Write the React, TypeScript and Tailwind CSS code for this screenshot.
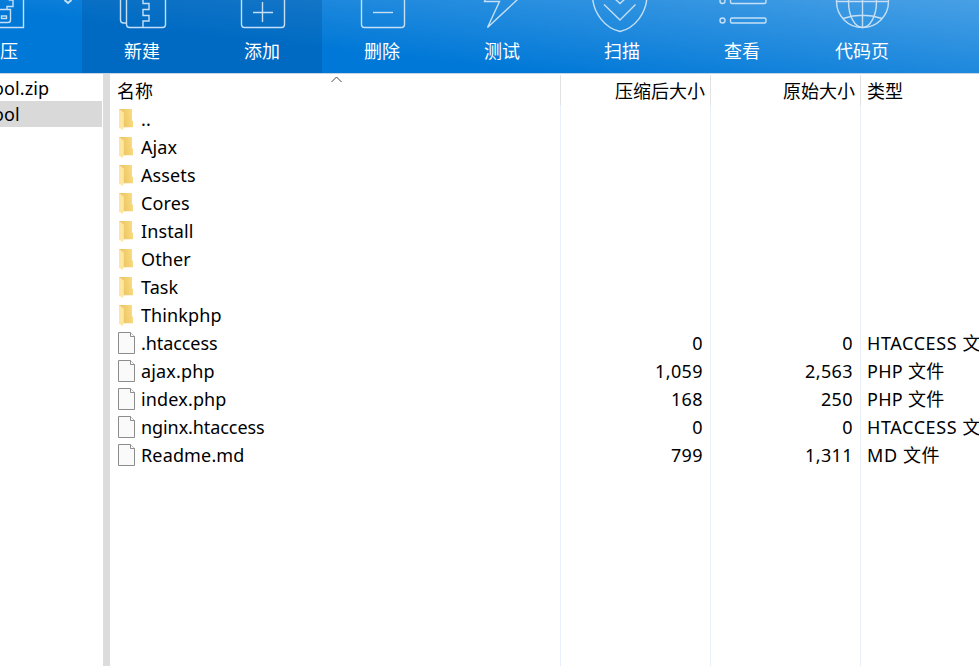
import { type JSX, type ReactNode } from "react";

type Tool = { label: string; icon: ReactNode; active?: boolean };

const tools: Tool[] = [
  {
    label: "新建",
    active: true,
    icon: (
      <>
        <path d="M38.5 -4V20q0 3 3 3H44" />
        <path d="M44.5 -4V24.5q0 3 3 3H80.500q3 0 3-3V-4" />
        <path d="M61 -2V3.500H67V9.500H61V15.500H67V21H61V27" />
      </>
    ),
  },
  {
    label: "添加",
    active: true,
    icon: (
      <>
        <path d="M39.5 -4V24.5q0 3 3 3H79.500q3 0 3-3V-4" />
        <path d="M51 12.500H71M60.500 2V22" />
      </>
    ),
  },
  {
    label: "删除",
    icon: (
      <>
        <path d="M39.5 -4V24.5q0 3 3 3H79.500q3 0 3-3V-4" />
        <path d="M51 12.500H71" />
      </>
    ),
  },
  {
    label: "测试",
    icon: <path d="M45 -4L42.500 1.500H57.500L45.500 27.500L76 -1" />,
  },
  {
    label: "扫描",
    icon: (
      <>
        <path d="M30.500 -4C31 13 43 28 58 31.500C73 28 84.500 13 85 -4" />
        <path d="M42 4.500L58 20L73.500 4.500M53 -1L58 3.500L63 -1" />
      </>
    ),
  },
  {
    label: "查看",
    icon: (
      <>
        <circle cx="40.500" cy="1" r="2.500" />
        <circle cx="40.500" cy="20.500" r="2.500" />
        <rect x="48.500" y="-2" width="35.500" height="5.500" rx="1.500" />
        <rect x="48.500" y="18" width="35.500" height="5" rx="1.500" />
      </>
    ),
  },
  {
    label: "代码页",
    icon: (
      <>
        <circle cx="60.500" cy="1.500" r="26" />
        <ellipse cx="60.500" cy="1.500" rx="14" ry="26" />
        <path d="M60.500 -4V27.500M34.500 1.500H86.500M41 18.500Q60.500 12 80 18.500" />
      </>
    ),
  },
];

const folders = ["..", "Ajax", "Assets", "Cores", "Install", "Other", "Task", "Thinkphp"];

const files = [
  { name: ".htaccess", packed: "0", size: "0", type: "HTACCESS 文件" },
  { name: "ajax.php", packed: "1,059", size: "2,563", type: "PHP 文件" },
  { name: "index.php", packed: "168", size: "250", type: "PHP 文件" },
  { name: "nginx.htaccess", packed: "0", size: "0", type: "HTACCESS 文件" },
  { name: "Readme.md", packed: "799", size: "1,311", type: "MD 文件" },
];

function ToolButton({ label, icon, active }: Tool): JSX.Element {
  return (
    <div className={`flex h-full w-[120px] shrink-0 flex-col items-center ${active ? "bg-[#004b96]/30" : ""}`}>
      <svg width="120" height="36" viewBox="0 0 120 36" fill="none" stroke="#c5e0f6" strokeWidth="1.4">
        {icon}
      </svg>
      <span className="leading-[30px]">{label}</span>
    </div>
  );
}

function FolderIcon(): JSX.Element {
  return (
    <svg width="16" height="22" viewBox="0 0 16 22" className="shrink-0">
      <defs>
        <linearGradient id="folder-back" x1="0" x2="1" y1="0.6" y2="0.4">
          <stop offset="0.3" stopColor="#ecc765" />
          <stop offset="1" stopColor="#fbdc82" />
        </linearGradient>
      </defs>
      <path d="M1 1H14V12.500L15 13V19.300H1Z" fill="url(#folder-back)" />
      <path d="M1 1L5.800 4.500V19.500L4.500 22L1 19.500Z" fill="#ffe6a0" />
    </svg>
  );
}

function FileIcon(): JSX.Element {
  return (
    <svg width="18" height="22" viewBox="0 0 18 22" className="shrink-0">
      <path d="M.5 .5H12.500L16.500 4.500V21.500H.5Z" fill="#fafafa" stroke="#8c8c8c" />
      <path d="M12.500 .5V4.500H16.500" fill="#fff" stroke="#8c8c8c" />
    </svg>
  );
}

function Toolbar(): JSX.Element {
  return (
    <header className="flex h-[74px] shrink-0 border-b border-[#c4d4e2] bg-[#0078d7] text-lg text-white">
      <div className="flex w-full bg-[linear-gradient(6.5deg,#0078d7_33%,#48a0e5_100%)]">
        <div className="h-full w-[82px] shrink-0 overflow-hidden">
          <svg width="82" height="36" viewBox="0 0 82 36" fill="none" stroke="#c5e0f6" strokeWidth="1.4">
            <path d="M-2 27.500H23.500V-2" />
            <path d="M9.500 -2V0H13V6.500H7V9.500H10.500V20Q10.500 22.500 8 22.500H-1M-1 9.500H7" />
            <rect x="1.500" y="16" width="5" height="2.500" />
            <path d="M64.500 0L68 3L71.500 0" strokeWidth="2" />
          </svg>
          <span className="block leading-[30px]">压</span>
        </div>
        {tools.map((tool) => (
          <ToolButton key={tool.label} {...tool} />
        ))}
      </div>
    </header>
  );
}

function Sidebar(): JSX.Element {
  return (
    <aside className="w-[103px] shrink-0 overflow-hidden pt-px">
      <div className="h-[26px] leading-[26px]">
        <span className="-ml-[7px] tracking-[0.1px]">ool.zip</span>
      </div>
      <div className="mr-px h-[26px] bg-[#d9d9d9] leading-[26px]">
        <span className="-ml-[7px] tracking-[0.1px]">ool</span>
      </div>
    </aside>
  );
}

function NameColumn(): JSX.Element {
  return (
    <div className="w-[450px] shrink-0">
      <div className="relative h-[31px] pl-[7px] leading-[34px]">
        名称
        <svg width="12" height="7" viewBox="0 0 12 7" className="absolute top-[2px] left-[221px]" fill="none" stroke="#444">
          <path d="M.5 6L5.500 1L10.500 6" />
        </svg>
      </div>
      {folders.map((name) => (
        <div key={name} className="flex h-7 items-center pl-2">
          <FolderIcon />
          <span className="ml-[7px] tracking-[0.1px]">{name}</span>
        </div>
      ))}
      {files.map(({ name }) => (
        <div key={name} className="flex h-7 items-center pl-2">
          <FileIcon />
          <span className={`ml-[5px] ${name.endsWith("htaccess") ? "tracking-[-0.08px]" : "tracking-[0.15px]"}`}>
            {name}
          </span>
        </div>
      ))}
    </div>
  );
}

function Column({ title, values, right }: { title: string; values: string[]; right?: boolean }): JSX.Element {
  return (
    <div className="flex w-[150px] shrink-0">
      <div className="flex w-px shrink-0 flex-col pt-px">
        <div className="h-[30px] bg-[#e2e2e2]" />
        <div className="flex-1 bg-[#e7f0fb]" />
      </div>
      <div className="flex-1 whitespace-nowrap">
        <div className={`h-[255px] leading-[34px] ${right ? "pr-[5px] text-right" : "pl-1.5"}`}>{title}</div>
        {values.map((value, i) => (
          <div
            key={i}
            className={`h-7 leading-7 ${
              right
                ? "pr-[7px] text-right tracking-[0.4px]"
                : value.startsWith("PHP")
                  ? "pl-1.5 tracking-[0.3px]"
                  : "pl-1.5 tracking-[0.6px]"
            }`}
          >
            {value}
          </div>
        ))}
      </div>
    </div>
  );
}

export default function App(): JSX.Element {
  return (
    <div className="flex h-screen flex-col overflow-hidden bg-white font-['Noto_Sans','Noto_Sans_CJK_SC',sans-serif] text-lg text-black">
      <Toolbar />
      <main className="flex min-h-0 flex-1">
        <Sidebar />
        <div className="w-[7px] shrink-0 bg-[#dcdcdc]" />
        <NameColumn />
        <Column title="压缩后大小" values={files.map((f) => f.packed)} right />
        <Column title="原始大小" values={files.map((f) => f.size)} right />
        <Column title="类型" values={files.map((f) => f.type)} />
      </main>
    </div>
  );
}
